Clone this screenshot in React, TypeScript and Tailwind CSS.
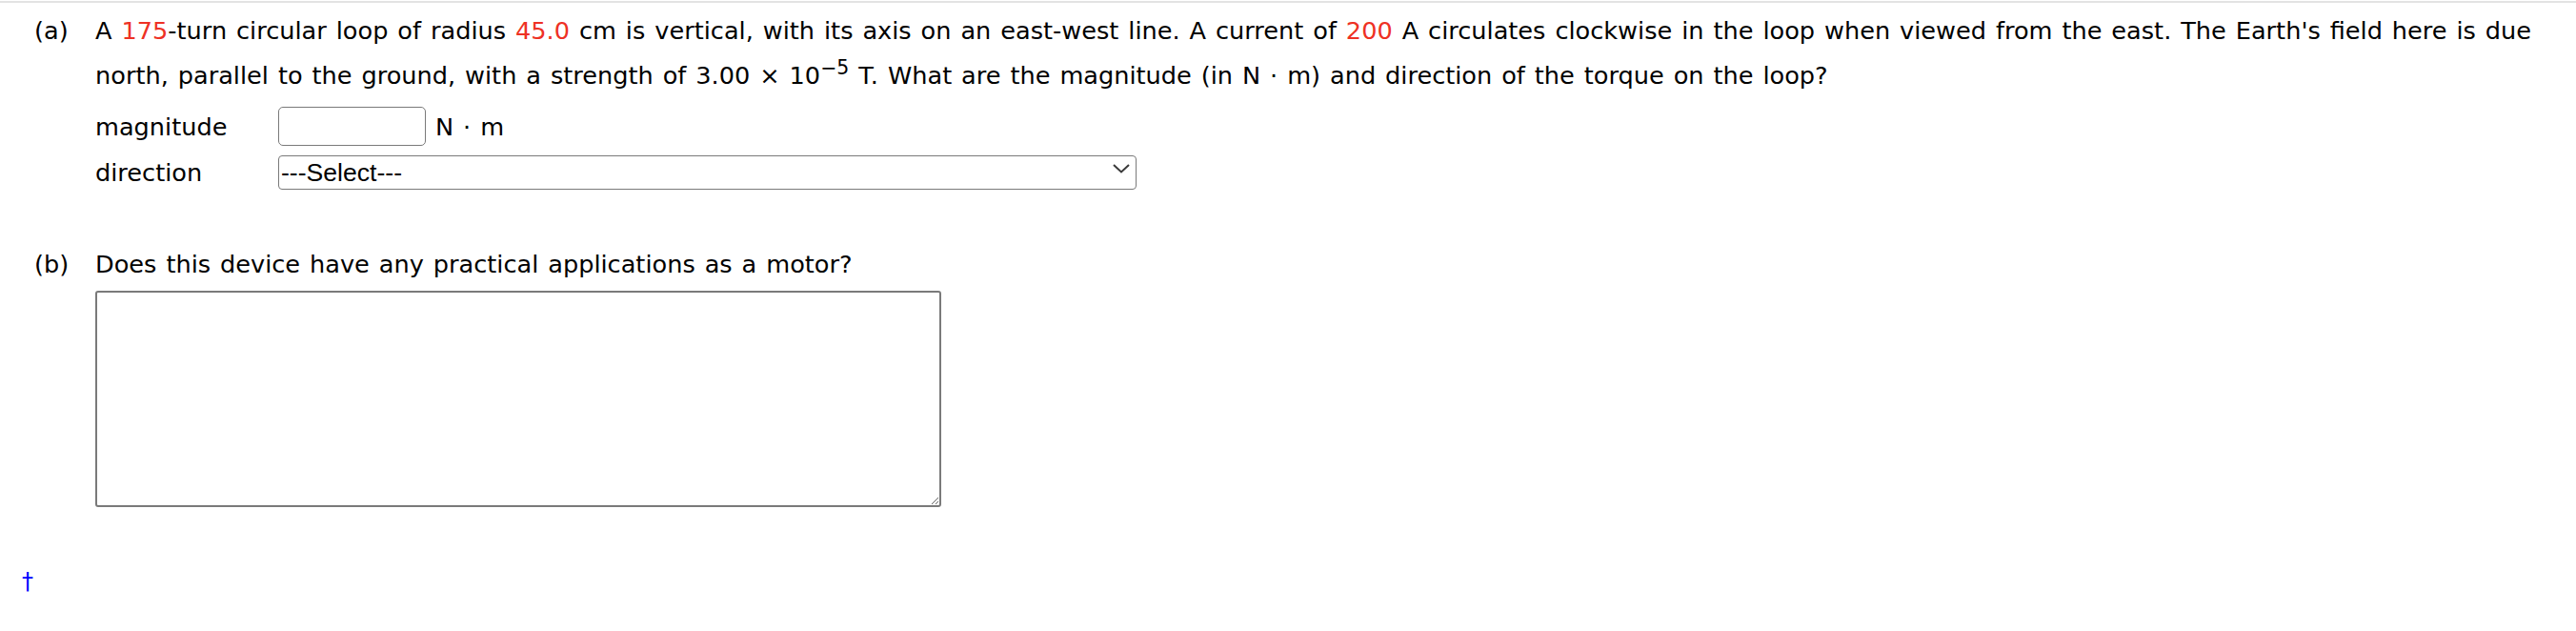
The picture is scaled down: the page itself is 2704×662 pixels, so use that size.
import React from "react";

const R = ({ children }: { children: React.ReactNode }) => (
  <span className="text-[#ee3124]">{children}</span>
);

export default function App() {
  return (
    <div className="w-[2704px] h-[662px] bg-white text-black font-['DejaVu_Sans',Verdana,sans-serif] text-[25.6px] leading-[47px] [word-spacing:1.8px] overflow-hidden">
      <div className="mt-px border-t-2 border-[#e3e3e3]" />
      <div className="pt-[6px] pl-[36px] flex">
        <div className="w-[64px] shrink-0">(a)</div>
        <div className="flex-1 pr-[20px]">
          <div>
            A <R>175</R>-turn circular loop of radius <R>45.0</R> cm is vertical, with its axis on an east-west line. A current of <R>200</R> A circulates clockwise in the loop when viewed from the east. The Earth's field here is due
            <br />
            north, parallel to the ground, with a strength of 3.00 × 10
            <sup className="text-[80%] top-[-0.5em]">−5</sup> T. What are the magnitude (in N · m) and direction of the torque on the loop?
          </div>
          <div className="mt-[9px] flex flex-col gap-[10px]">
            <div className="flex items-center h-[41px]">
              <div className="w-[192px] leading-[30px]">magnitude</div>
              <input
                type="text"
                className="w-[155px] h-[41px] border-[1.5px] border-[#7a7a7a] rounded-[5px] bg-white"
              />
              <div className="ml-[10px] leading-[30px]">N · m</div>
            </div>
            <div className="flex items-center h-[36px]">
              <div className="w-[192px] leading-[30px]">direction</div>
              <div className="relative">
                <select className="appearance-none w-[901px] h-[36px] border-[1.5px] border-[#7a7a7a] rounded-[4px] bg-white pl-[2px] font-['Liberation_Sans',Arial,sans-serif] text-[26.6px] leading-[30px] [word-spacing:0px] text-black">
                  <option>---Select---</option>
                </select>
                <svg
                  className="absolute right-[7px] top-[14px] pointer-events-none"
                  width="18"
                  height="10"
                  viewBox="0 0 18 10"
                >
                  <path d="M1 1 L9 8.5 L17 1" fill="none" stroke="#3a3a3a" strokeWidth="2" />
                </svg>
              </div>
            </div>
          </div>
        </div>
      </div>
      <div className="mt-[55px] pl-[36px] flex">
        <div className="w-[64px] shrink-0">(b)</div>
        <div className="flex-1">
          <div>Does this device have any practical applications as a motor?</div>
          <textarea className="mt-[4px] block w-[888px] h-[227px] border-[2px] border-[#7a7a7a] rounded-[3px] bg-white" />
        </div>
      </div>
      <div className="mt-[63px] pl-[23px] text-[#0000ff] text-[24px] leading-[30px]">†</div>
    </div>
  );
}
